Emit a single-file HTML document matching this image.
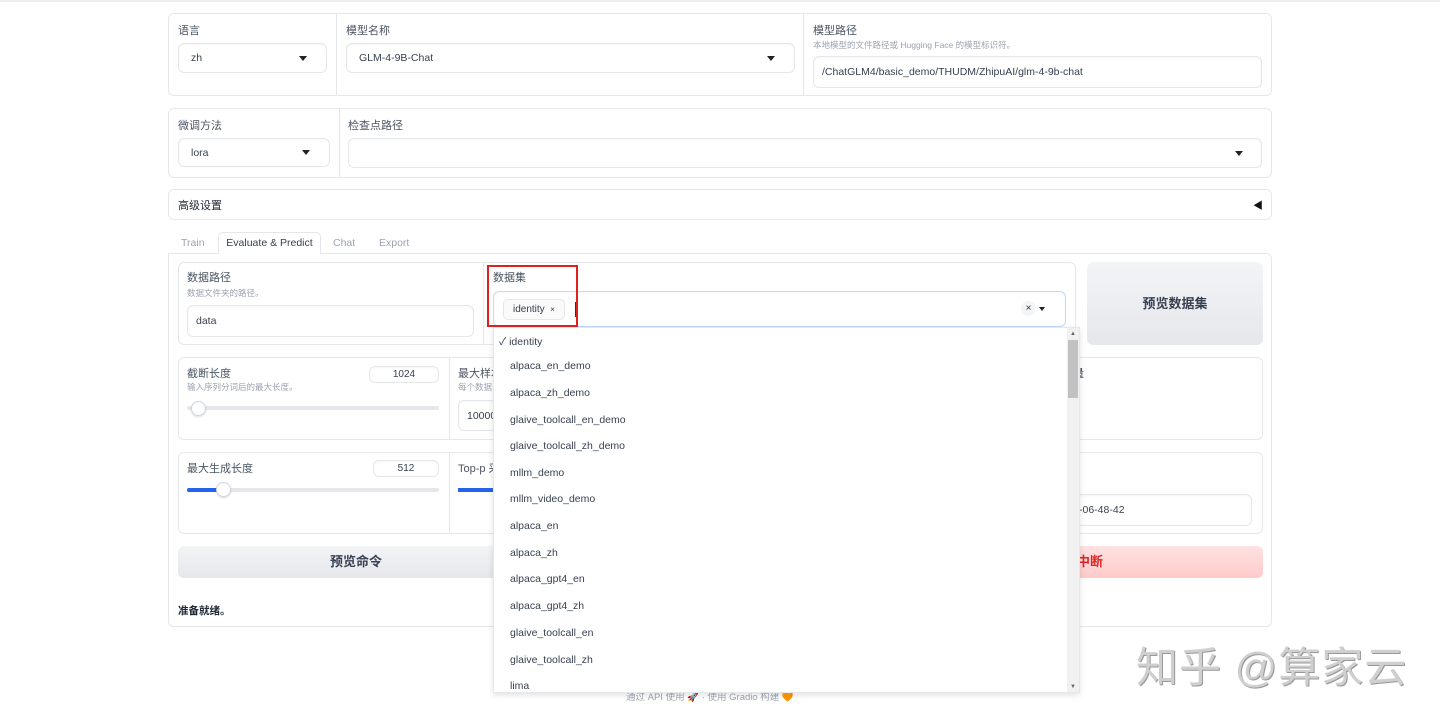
<!DOCTYPE html>
<html><head><meta charset="utf-8"><style>
*{box-sizing:border-box;margin:0;padding:0}
body{width:1440px;height:716px;background:#fff;font-family:"Liberation Sans","Noto Sans CJK SC",sans-serif;font-size:11px;color:#374151;position:relative;overflow:hidden}
.a{position:absolute;white-space:nowrap}
.box{position:absolute;border:1px solid #e5e7eb;border-radius:6px;background:#fff}
.inp{position:absolute;border:1px solid #e5e7eb;border-radius:6px;background:#fff;box-shadow:inset 0 1px 2px rgba(0,0,0,.04);padding-left:12px;display:flex;align-items:center;font-size:10.5px;color:#374151;white-space:nowrap}
.lbl{position:absolute;font-size:11px;color:#4b5563;white-space:nowrap}
.sub{position:absolute;font-size:8.5px;color:#9ca3af;white-space:nowrap}
.vl{position:absolute;width:1px;background:#e5e7eb}
.car{position:absolute;width:0;height:0;border-left:4px solid transparent;border-right:4px solid transparent;border-top:5px solid #222}
.item{position:absolute;left:510px;font-size:10.5px;color:#374151;white-space:nowrap}
.track{position:absolute;height:4px;background:#e5e7eb;border-radius:2px}
.knob{position:absolute;width:15px;height:15px;border-radius:50%;background:#fff;border:1px solid #d1d5db;box-shadow:0 1px 2px rgba(0,0,0,.15)}
</style></head><body>
<div class="a" style="left:0;top:0;width:1440px;height:2px;background:#eee"></div>

<div class="box" style="left:168px;top:13px;width:1104px;height:83px"></div>
<div class="vl" style="left:336px;top:14px;height:81px"></div>
<div class="vl" style="left:803px;top:14px;height:81px"></div>
<div class="lbl" style="left:178px;top:22px">语言</div>
<div class="inp" style="left:178px;top:43px;width:149px;height:30px">zh</div><div class="car" style="left:299px;top:56px"></div>
<div class="lbl" style="left:346px;top:22px">模型名称</div>
<div class="inp" style="left:346px;top:43px;width:449px;height:30px">GLM-4-9B-Chat</div><div class="car" style="left:767px;top:56px"></div>
<div class="lbl" style="left:813px;top:22px">模型路径</div>
<div class="sub" style="left:813px;top:39px">本地模型的文件路径或 Hugging Face 的模型标识符。</div>
<div class="inp" style="left:813px;top:56px;width:449px;height:32px;padding-left:8px">/ChatGLM4/basic_demo/THUDM/ZhipuAI/glm-4-9b-chat</div>

<div class="box" style="left:168px;top:108px;width:1104px;height:70px"></div>
<div class="vl" style="left:339px;top:109px;height:68px"></div>
<div class="lbl" style="left:178px;top:117px">微调方法</div>
<div class="inp" style="left:178px;top:138px;width:152px;height:29px">lora</div><div class="car" style="left:302px;top:150px"></div>
<div class="lbl" style="left:348px;top:117px">检查点路径</div>
<div class="inp" style="left:348px;top:138px;width:914px;height:30px"></div><div class="car" style="left:1235px;top:151px"></div>

<div class="box" style="left:168px;top:189px;width:1104px;height:31px"></div>
<div class="a" style="left:178px;top:197px;font-size:11px;color:#1f2937">高级设置</div>
<div class="a" style="left:1253px;top:197px;font-size:10px;color:#111">◀</div>

<div class="a" style="left:181px;top:237px;font-size:10.5px;color:#9ca3af">Train</div>
<div class="a" style="left:218px;top:232px;width:103px;height:22px;border:1px solid #e5e7eb;border-bottom:none;border-radius:5px 5px 0 0;background:#fff;z-index:2;font-size:10.5px;color:#374151;text-align:center;line-height:21px">Evaluate &amp; Predict</div>
<div class="a" style="left:333px;top:237px;font-size:10.5px;color:#9ca3af">Chat</div>
<div class="a" style="left:379px;top:237px;font-size:10.5px;color:#9ca3af">Export</div>
<div class="box" style="left:168px;top:253px;width:1104px;height:374px;border-radius:0 6px 6px 6px"></div>

<div class="box" style="left:178px;top:262px;width:898px;height:83px"></div>
<div class="vl" style="left:483px;top:263px;height:81px"></div>
<div class="lbl" style="left:187px;top:269px">数据路径</div>
<div class="sub" style="left:187px;top:287px">数据文件夹的路径。</div>
<div class="inp" style="left:187px;top:305px;width:287px;height:32px;padding-left:8px">data</div>
<div class="lbl" style="left:493px;top:269px">数据集</div>
<div class="inp" style="left:493px;top:291px;width:573px;height:36px;border-color:#bfdbfe;padding-left:9px"><span style="border:1px solid #e5e7eb;border-radius:5px;padding:4px 9px;font-size:10px;background:#fafafa">identity &nbsp;<span style="font-size:8px">×</span></span><span style="margin-left:10px;width:1px;height:15px;background:#333;display:inline-block"></span></div>
<div class="a" style="left:1021px;top:301px;width:15px;height:15px;border-radius:50%;background:#f3f4f6;font-size:10px;text-align:center;line-height:15px;color:#333">×</div>
<div class="car" style="left:1039px;top:307px;border-top-width:4px;border-left-width:3px;border-right-width:3px"></div>
<div class="a" style="left:487px;top:265px;width:91px;height:62px;border:2px solid #e0201e;z-index:5"></div>

<div class="a" style="left:1087px;top:262px;width:176px;height:83px;border-radius:6px;background:linear-gradient(#f3f4f6,#e5e7eb);font-size:13px;font-weight:bold;color:#374151;text-align:center;line-height:83px">预览数据集</div>

<div class="box" style="left:178px;top:357px;width:1085px;height:83px"></div>
<div class="vl" style="left:449px;top:358px;height:81px"></div>
<div class="lbl" style="left:187px;top:365px">截断长度</div>
<div class="sub" style="left:187px;top:381px">输入序列分词后的最大长度。</div>
<div class="inp" style="left:369px;top:366px;width:70px;height:17px;justify-content:center;padding:0;font-size:10px">1024</div>
<div class="track" style="left:187px;top:406px;width:252px"></div>
<div class="knob" style="left:191px;top:401px"></div>
<div class="lbl" style="left:458px;top:365px">最大样本</div>
<div class="sub" style="left:458px;top:381px">每个数据</div>
<div class="inp" style="left:458px;top:400px;width:40px;height:31px;padding-left:8px">10000</div>
<div class="a" style="left:1073px;top:365px;font-size:11px">量</div>

<div class="box" style="left:178px;top:452px;width:1085px;height:82px"></div>
<div class="vl" style="left:449px;top:453px;height:80px"></div>
<div class="lbl" style="left:187px;top:460px">最大生成长度</div>
<div class="inp" style="left:373px;top:460px;width:66px;height:17px;justify-content:center;padding:0;font-size:10px">512</div>
<div class="track" style="left:187px;top:488px;width:252px"></div>
<div class="a" style="left:187px;top:488px;width:36px;height:4px;background:#2563eb;border-radius:2px"></div>
<div class="knob" style="left:216px;top:482px"></div>
<div class="lbl" style="left:458px;top:460px">Top-p 采</div>
<div class="a" style="left:458px;top:488px;width:40px;height:4px;background:#2563eb"></div>
<div class="inp" style="left:1070px;top:494px;width:182px;height:32px;padding-left:8px">-06-48-42</div>

<div class="a" style="left:178px;top:546px;width:320px;height:32px;border-radius:6px;background:linear-gradient(#f3f4f6,#e5e7eb);font-size:13px;font-weight:bold;color:#374151;padding-left:152px;line-height:32px">预览命令</div>
<div class="a" style="left:1075px;top:546px;width:188px;height:32px;border-radius:6px;background:linear-gradient(#fee2e2,#fecaca);font-size:13px;font-weight:bold;color:#dc2626;padding-left:2px;line-height:32px">中断</div>
<div class="a" style="left:178px;top:603px;font-size:10.5px;font-weight:bold;color:#1f2937">准备就绪。</div>

<div class="a" style="left:493px;top:327px;width:587px;height:366px;background:#fff;border:1px solid #e5e7eb;box-shadow:0 2px 6px rgba(0,0,0,.12);z-index:4">
<div class="a" style="right:0;top:0;width:12px;height:364px;background:#f1f1f1"></div>
<div class="a" style="right:1px;top:12px;width:10px;height:58px;background:#c1c1c1"></div>
<div class="a" style="right:3px;top:3px;font-size:6px;color:#666">▲</div>
<div class="a" style="right:3px;bottom:2px;font-size:6px;color:#666">▼</div>
</div>
<div style="position:absolute;z-index:6;left:0;top:0">
<div class="item" style="left:499px;top:334px">✓ identity</div>
<div class="item" style="top:360px">alpaca_en_demo</div>
<div class="item" style="top:387px">alpaca_zh_demo</div>
<div class="item" style="top:414px">glaive_toolcall_en_demo</div>
<div class="item" style="top:440px">glaive_toolcall_zh_demo</div>
<div class="item" style="top:467px">mllm_demo</div>
<div class="item" style="top:493px">mllm_video_demo</div>
<div class="item" style="top:520px">alpaca_en</div>
<div class="item" style="top:547px">alpaca_zh</div>
<div class="item" style="top:573px">alpaca_gpt4_en</div>
<div class="item" style="top:600px">alpaca_gpt4_zh</div>
<div class="item" style="top:627px">glaive_toolcall_en</div>
<div class="item" style="top:654px">glaive_toolcall_zh</div>
<div class="item" style="top:680px">lima</div>
</div>

<div class="a" style="left:626px;top:689px;font-size:9.5px;color:#9ca3af">通过 API 使用 🚀 · 使用 Gradio 构建 🧡</div>
<div class="a" style="left:1136px;top:634px;font-size:42px;color:#cfcfcf;letter-spacing:1px;white-space:nowrap;text-shadow:1px 1px 0 #999">知乎 @算家云</div>
</body></html>
